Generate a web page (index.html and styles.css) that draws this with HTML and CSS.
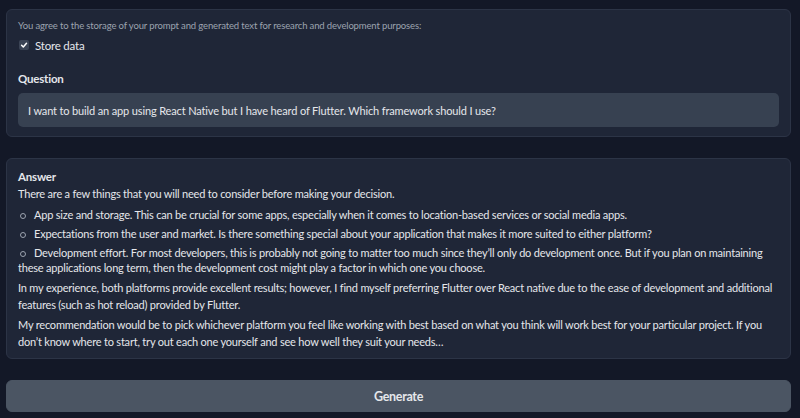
FILE: index.html
```html
<!DOCTYPE html>
<html>
<head>
<meta charset="utf-8">
<link rel="stylesheet" href="styles.css">
</head>
<body>
<div class="page">
  <section class="panel panel-top">
    <p class="note">You agree to the storage of your prompt and generated text for research and development purposes:</p>
    <label class="check-row">
      <span class="checkbox"><svg viewBox="0 0 10 10" width="10" height="10"><path d="M2.6 5.3 L4.3 7 L7.5 3.3" fill="none" stroke="#fff" stroke-width="1.5" stroke-linecap="round" stroke-linejoin="round"/></svg></span>
      <span class="check-label">Store data</span>
    </label>
    <div class="label">Question</div>
    <div class="input">I want to build an app using React Native but I have heard of Flutter. Which framework should I use?</div>
  </section>
  <section class="panel panel-answer">
    <div class="label answer-label">Answer</div>
    <p class="line">There are a few things that you will need to consider before making your decision.</p>
    <ul class="list">
      <li>App size and storage. This can be crucial for some apps, especially when it comes to location-based services or social media apps.</li>
      <li>Expectations from the user and market. Is there something special about your application that makes it more suited to either platform?</li>
      <li>Development effort. For most developers, this is probably not going to matter too much since they’ll only do development once. But if you plan on maintaining these applications long term, then the development cost might play a factor in which one you choose.</li>
    </ul>
    <p class="para first">In my experience, both platforms provide excellent results; however, I find myself preferring Flutter over React native due to the ease of development and additional features (such as hot reload) provided by Flutter.</p>
    <p class="para">My recommendation would be to pick whichever platform you feel like working with best based on what you think will work best for your particular project. If you don’t know where to start, try out each one yourself and see how well they suit your needs…</p>
  </section>
  <button class="generate">Generate</button>
</div>
</body>
</html>
```
FILE: styles.css
```css
* { box-sizing: border-box; }
html, body { margin: 0; padding: 0; }
body {
  background: #131827;
  font-family: Lato, "Open Sans", sans-serif;
  letter-spacing: -0.2px;
  color: #e5e7eb;
  width: 800px;
  height: 418px;
  overflow: hidden;
}
.page {
  padding: 9px 9px 0 6px;
  display: flex;
  flex-direction: column;
  gap: 21px;
}
.panel {
  background: #1f2637;
  border: 1px solid #2c3446;
  border-radius: 6px;
  padding: 9px 10px 9px 11px;
}
.note {
  margin: 0;
  font-size: 9.5px;
  line-height: 14px;
  color: #9ca3af;
  letter-spacing: -0.14px;
}
.check-row {
  display: flex;
  align-items: center;
  gap: 6px;
  margin-top: 4px;
  height: 16px;
  padding-left: 1px;
}
.checkbox {
  width: 10px;
  height: 10px;
  background: #3b4455;
  border-radius: 2px;
  display: flex;
}
.check-label {
  font-size: 11.5px;
  color: #e5e7eb;
}
.label {
  font-weight: 700;
  font-size: 11.5px;
  line-height: 16px;
  color: #e5e7eb;
}
.panel-top .label { margin-top: 18px; }
.input {
  margin-top: 6px;
  margin-right: 1px;
  height: 34px;
  background: #374151;
  border-radius: 5px;
  padding: 0 10px;
  display: flex;
  align-items: center;
  font-size: 11px;
  letter-spacing: -0.14px;
  color: #e5e7eb;
}
.panel-answer { padding-top: 10px; padding-bottom: 8px; }
.line { margin: 0; font-size: 11px; line-height: 17px; }
.list {
  margin: 5px 0 0 0;
  padding: 0;
  list-style: none;
  font-size: 11px;
  line-height: 15px;
}
.list li { margin-bottom: 4px; }
.list li::before {
  content: "";
  display: inline-block;
  width: 4px;
  height: 4px;
  border: 1px solid #9ca3af;
  border-radius: 50%;
  margin: 0 8px 1px 2px;
  vertical-align: middle;
}
.para { margin: 3px 0 0 0; font-size: 11px; line-height: 17px; }
.para.first { margin-top: 0; }
.generate {
  width: 100%;
  height: 32px;
  border: 1px solid #4b5563;
  background: #4b5563;
  border-radius: 6px;
  color: #e5e7eb;
  font-family: Lato, "Open Sans", sans-serif;
  letter-spacing: -0.3px;
  font-weight: 700;
  font-size: 12.5px;
}
```
